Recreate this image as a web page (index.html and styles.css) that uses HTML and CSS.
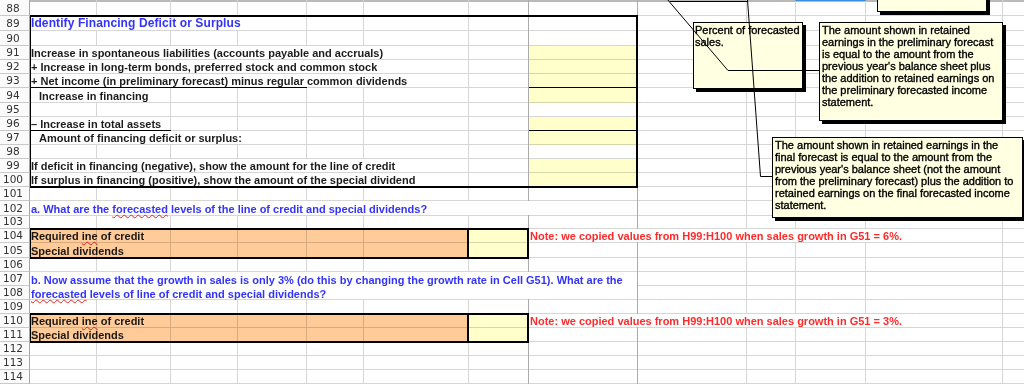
FILE: index.html
```html
<!DOCTYPE html>
<html lang="en">
<head>
<meta charset="utf-8">
<title>Identify Financing Deficit or Surplus</title>
<link rel="stylesheet" href="styles.css">
</head>
<body>
<div class="sheet">
  <!-- fills (gridlines show through via multiply) -->
  <div class="fill yellow f-top1"></div>
  <div class="fill yellow f-top2"></div>
  <div class="fill yellow f-top3"></div>
  <div class="fill orange f-or1"></div>
  <div class="fill yellow f-ye1"></div>
  <div class="fill orange f-or2"></div>
  <div class="fill yellow f-ye2"></div>

  <!-- cell text -->
  <div class="cell title"><span>Identify Financing Deficit or Surplus</span></div>
  <div class="cell t91"><span>Increase in spontaneous liabilities (accounts payable and accruals)</span></div>
  <div class="cell t92"><span>+ Increase in long-term bonds, preferred stock and common stock</span></div>
  <div class="cell t93"><span>+ Net income (in preliminary forecast) minus regular common dividends</span></div>
  <div class="cell indent t94"><span>Increase in financing</span></div>
  <div class="cell t96"><span>– Increase in total assets</span></div>
  <div class="cell indent t97"><span>Amount of financing deficit or surplus:</span></div>
  <div class="cell t99"><span>If deficit in financing (negative), show the amount for the line of credit</span></div>
  <div class="cell t100"><span>If surplus in financing (positive), show the amount of the special dividend</span></div>

  <div class="cell question qa"><span>a. What are the <span class="spell">forecasted</span> levels of the line of credit and special dividends?</span></div>

  <div class="cell plain t104"><span>Required <span class="spell">ine</span> of credit</span></div>
  <div class="cell plain t105"><span>Special dividends</span></div>
  <div class="cell note n104"><span>Note: we copied values from H99:H100 when sales growth in G51 = 6%.</span></div>

  <div class="cell question wrap qb">b. Now assume that the growth in sales is only 3% (do this by changing the growth rate in Cell G51). What are the<br><span class="spell">forecasted</span> levels of line of credit and special dividends?</div>

  <div class="cell plain t110"><span>Required <span class="spell">ine</span> of credit</span></div>
  <div class="cell plain t111"><span>Special dividends</span></div>
  <div class="cell note n110"><span>Note: we copied values from H99:H100 when sales growth in G51 = 3%.</span></div>

  <!-- thin cell borders -->
  <div class="rule u93a"></div>
  <div class="rule u93b"></div>
  <div class="rule u96a"></div>
  <div class="rule u96b"></div>

  <!-- thick outlines -->
  <div class="outline box-main"></div>
  <div class="outline box-or1"></div>
  <div class="outline box-ye1"></div>
  <div class="outline box-or2"></div>
  <div class="outline box-ye2"></div>

  <!-- row headers -->
  <div class="rh">88</div>
  <div class="rh">89</div>
  <div class="rh">90</div>
  <div class="rh">91</div>
  <div class="rh">92</div>
  <div class="rh">93</div>
  <div class="rh">94</div>
  <div class="rh">95</div>
  <div class="rh">96</div>
  <div class="rh">97</div>
  <div class="rh">98</div>
  <div class="rh">99</div>
  <div class="rh">100</div>
  <div class="rh">101</div>
  <div class="rh">102</div>
  <div class="rh">103</div>
  <div class="rh">104</div>
  <div class="rh">105</div>
  <div class="rh">106</div>
  <div class="rh">107</div>
  <div class="rh">108</div>
  <div class="rh">109</div>
  <div class="rh">110</div>
  <div class="rh">111</div>
  <div class="rh">112</div>
  <div class="rh">113</div>
  <div class="rh">114</div>

  <!-- comments floating over the sheet -->
  <div class="comment cm1"></div>
  <div class="comment cm2">Percent of forecasted<br>sales.</div>
  <div class="comment cm3">The amount shown in retained<br>earnings in the preliminary forecast<br>is equal to the amount from the<br>previous year's balance sheet plus<br>the addition to retained earnings on<br>the preliminary forecasted income<br>statement.</div>
  <div class="comment cm4">The amount shown in retained earnings in the<br>final forecast is equal to the amount from the<br>previous year's balance sheet (not the amount<br>from the preliminary forecast) plus the addition to<br>retained earnings on the final forecasted income<br>statement.</div>

  <svg class="arrows" width="1024" height="384" viewBox="0 0 1024 384" aria-hidden="true">
    <rect x="795" y="0" width="71" height="1" fill="#3d8ee6"/>
    <polyline points="670,1.5 747.5,1.5" fill="none" stroke="#000" stroke-width="1"/>
    <polyline points="667,-1 728,70.5 819,70.5" fill="none" stroke="#000" stroke-width="1"/>
    <polyline points="747.5,0 760.5,176.5 772,176.5" fill="none" stroke="#000" stroke-width="1"/>
  </svg>
</div>
</body>
</html>
```

FILE: styles.css
```css
html, body {
  margin: 0;
  padding: 0;
  background: #ffffff;
}

.sheet {
  --g: #d6d6d6;
  --d: #ababab;
  position: relative;
  isolation: isolate;
  overflow: hidden;
  width: 1024px;
  height: 384px;
  display: grid;
  grid-template-columns: 30px 67px 74px 67px 69px 57px 105px 60px 109px 109px 49px 70px 137px 21px;
  grid-template-rows: 16px 15px 15px 14px 14px 14px 15px 14px 14px 14px 14px 14px 14px 14px 15px 13px 14px 15px 14px 14px 14px 14px 14px 14px 14px 14px 14px;
  font-family: "Liberation Sans", Arial, sans-serif;
  font-size: 11px;
  font-weight: bold;
  letter-spacing: 0;
  color: #1c1c1c;
  background-color: #ffffff;
  background-image:
    linear-gradient(to right,
      transparent 0 96px, var(--g) 96px 97px,
      transparent 97px 170px, var(--g) 170px 171px,
      transparent 171px 237px, var(--g) 237px 238px,
      transparent 238px 306px, var(--g) 306px 307px,
      transparent 307px 363px, var(--g) 363px 364px,
      transparent 364px 468px, var(--g) 468px 469px,
      transparent 469px 528px, var(--d) 528px 529px,
      transparent 529px 637px, var(--d) 637px 638px,
      transparent 638px 746px, var(--g) 746px 747px,
      transparent 747px 795px, var(--g) 795px 796px,
      transparent 796px 865px, var(--g) 865px 866px,
      transparent 866px 1002px, var(--g) 1002px 1003px,
      transparent 1003px),
    linear-gradient(to bottom,
      #b9b9b9 0 2px, transparent 2px 15px,
      var(--g) 15px 16px, transparent 16px 30px,
      var(--g) 30px 31px, transparent 31px 45px,
      var(--g) 45px 46px, transparent 46px 59px,
      var(--g) 59px 60px, transparent 60px 73px,
      var(--g) 73px 74px, transparent 74px 87px,
      var(--g) 87px 88px, transparent 88px 102px,
      var(--g) 102px 103px, transparent 103px 116px,
      var(--g) 116px 117px, transparent 117px 130px,
      var(--g) 130px 131px, transparent 131px 144px,
      var(--g) 144px 145px, transparent 145px 158px,
      var(--g) 158px 159px, transparent 159px 172px,
      var(--g) 172px 173px, transparent 173px 186px,
      var(--g) 186px 187px, transparent 187px 200px,
      var(--g) 200px 201px, transparent 201px 215px,
      var(--g) 215px 216px, transparent 216px 228px,
      var(--g) 228px 229px, transparent 229px 242px,
      var(--g) 242px 243px, transparent 243px 257px,
      var(--g) 257px 258px, transparent 258px 271px,
      var(--g) 271px 272px, transparent 272px 285px,
      var(--g) 285px 286px, transparent 286px 299px,
      var(--g) 299px 300px, transparent 300px 313px,
      var(--g) 313px 314px, transparent 314px 327px,
      var(--g) 327px 328px, transparent 328px 341px,
      var(--g) 341px 342px, transparent 342px 355px,
      var(--g) 355px 356px, transparent 356px 369px,
      var(--g) 369px 370px, transparent 370px 383px,
      var(--g) 383px 384px);
}

/* ---------- row headers ---------- */
.rh {
  grid-column: 1;
  box-sizing: border-box;
  background: #fbfbfb;
  border-right: 1px solid #a6a6a6;
  border-bottom: 1px solid #c9c9c9;
  font-family: "DejaVu Sans", sans-serif;
  font-weight: normal;
  font-size: 10.5px;
  letter-spacing: 0;
  color: #333333;
  line-height: 13px;
  display: flex;
  align-items: flex-end;
  justify-content: center;
  padding-right: 3px;
}
.rh:first-child { border-top: 2px solid #b9b9b9; }

/* ---------- fills ---------- */
.fill { mix-blend-mode: multiply; }
.yellow { background: #ffffcc; }
.orange { background: #ffcc99; }
.f-top1 { grid-area: 4 / 9 / 8 / 10; }
.f-top2 { grid-area: 9 / 9 / 11 / 10; }
.f-top3 { grid-area: 12 / 9 / 14 / 10; }
.f-or1 { grid-area: 17 / 2 / 19 / 8; }
.f-ye1 { grid-area: 17 / 8 / 19 / 9; }
.f-or2 { grid-area: 23 / 2 / 25 / 8; }
.f-ye2 { grid-area: 23 / 8 / 25 / 9; }

/* ---------- text cells (overflowing text hides the gridlines) ---------- */
.cell {
  background: #ffffff;
  margin: 0 1px 1px 0;
  padding-left: 1px;
  white-space: nowrap;
  line-height: 12px;
  display: flex;
  align-items: flex-end;
}
.cell.plain { background: transparent; }
.indent { padding-left: 9px; }

.title {
  grid-area: 2 / 2 / 3 / 6;
  font-size: 12px;
  line-height: 13px;
  letter-spacing: 0.1px;
  color: #3333ff;
}
.t91 { grid-area: 4 / 2 / 5 / 8; }
.t92 { grid-area: 5 / 2 / 6 / 8; }
.t93 { grid-area: 6 / 2 / 7 / 8; }
.t94 { grid-area: 7 / 2 / 8 / 4; }
.t96 { grid-area: 9 / 2 / 10 / 4; }
.t97 { grid-area: 10 / 2 / 11 / 6; }
.t99 { grid-area: 12 / 2 / 13 / 8; }
.t100 { grid-area: 13 / 2 / 14 / 8; }

.question { color: #3333ff; letter-spacing: 0; }
.qa { grid-area: 15 / 2 / 16 / 10; }
.qb {
  grid-area: 20 / 2 / 22 / 10;
  display: block;
  line-height: 14px;
  padding-top: 1px;
}

.t104 { grid-area: 17 / 2 / 18 / 4; }
.t105 { grid-area: 18 / 2 / 19 / 4; }
.t110 { grid-area: 23 / 2 / 24 / 4; }
.t111 { grid-area: 24 / 2 / 25 / 4; }

.note { color: #ff2a2a; padding-left: 1px; }
.n104 { grid-area: 17 / 9 / 18 / 14; }
.n110 { grid-area: 23 / 9 / 24 / 14; }

.spell {
  text-decoration: underline wavy #e52222;
  text-decoration-thickness: 1px;
  text-underline-offset: 1px;
}

/* ---------- thin black cell borders ---------- */
.rule {
  align-self: end;
  height: 1px;
  background: #000000;
}
.u93a { grid-area: 6 / 2 / 7 / 6; }
.u93b { grid-area: 6 / 9 / 7 / 10; }
.u96a { grid-area: 9 / 2 / 10 / 4; }
.u96b { grid-area: 9 / 9 / 10 / 10; }

/* ---------- thick outlines ---------- */
.outline {
  border: 2px solid #000000;
}
.box-main { grid-area: 2 / 2 / 14 / 10; margin: -1px 0 -1px -1px; }
.box-or1 { grid-area: 17 / 2 / 19 / 8; margin: -1px 0 -1px -1px; }
.box-ye1 { grid-area: 17 / 8 / 19 / 9; margin: -1px 0 -1px 0; border-left: 0; }
.box-or2 { grid-area: 23 / 2 / 25 / 8; margin: -1px 0 -1px -1px; }
.box-ye2 { grid-area: 23 / 8 / 25 / 9; margin: -1px 0 -1px 0; border-left: 0; }

/* ---------- comments ---------- */
.comment {
  position: absolute;
  box-sizing: border-box;
  background: #ffffe1;
  border: 1px solid #000000;
  box-shadow: 3px 3px 0 #000000;
  padding: 1px 2px 0;
  font-family: "Liberation Sans", Arial, sans-serif;
  font-weight: normal;
  font-size: 11px;
  letter-spacing: 0;
  line-height: 12px;
  color: #000000;
  white-space: nowrap;
  -webkit-text-stroke: 0.35px #000000;
}
.cm1 { left: 877px; top: -20px; width: 110px; height: 32px; }
.cm2 { left: 693px; top: 22px; width: 110px; height: 67px; padding-left: 1px; }
.cm3 { left: 819px; top: 22px; width: 184px; height: 99px; }
.cm4 { left: 772px; top: 137px; width: 251px; height: 81px; }

.arrows {
  position: absolute;
  left: 0;
  top: 0;
  pointer-events: none;
}
```
